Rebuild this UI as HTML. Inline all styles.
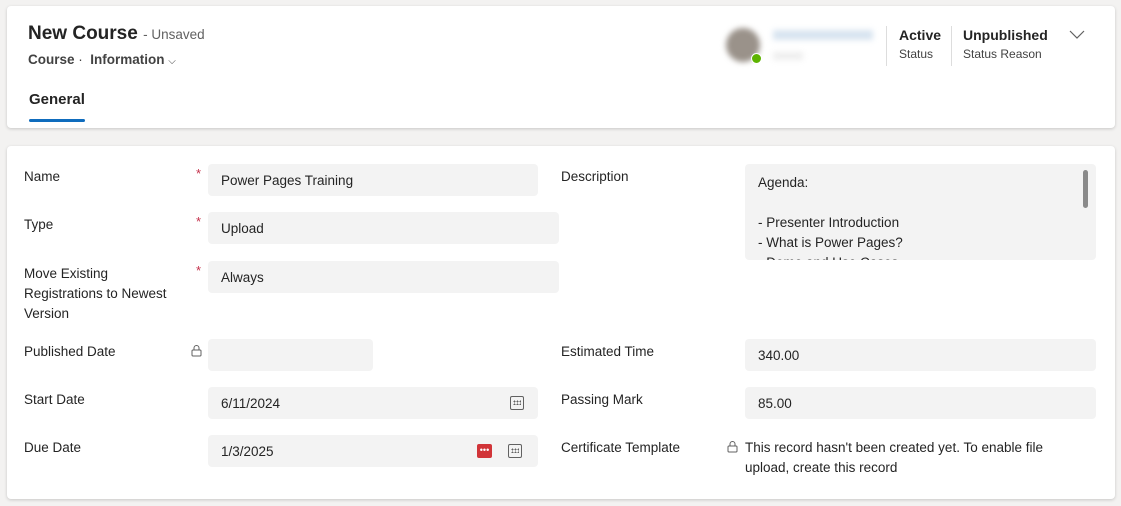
<!DOCTYPE html>
<html><head><style>
body{margin:0;width:1121px;height:506px;background:#f3f2f1;font-family:"Liberation Sans",sans-serif;color:#242424;position:relative;overflow:hidden}
.card{position:absolute;background:#fff;border-radius:4px;box-shadow:0 1px 3px rgba(0,0,0,.18)}
.a{position:absolute;white-space:nowrap}
.lbl{position:absolute;font-size:13.5px;color:#242424;line-height:20px}
.in{position:absolute;background:#f3f3f3;border-radius:4px;font-size:13.5px;line-height:34px;padding-left:13px;box-sizing:border-box;height:32px}
.req{position:absolute;color:#c4314b;font-size:13px}
.cal{position:absolute;width:12px;height:12px;border:1px solid #616161;border-radius:2px}
.cal:after{content:"";position:absolute;left:2px;top:3px;width:8px;height:5px;background:radial-gradient(circle,#616161 0.8px,transparent 1px) 0 0/3px 3px}
</style></head><body>
<div class="card" style="left:7px;top:6px;width:1108px;height:122px">
 <div class="a" style="left:21px;top:17px;font-size:19px;font-weight:bold">New Course <span style="font-size:13.5px;font-weight:normal;color:#616161">- Unsaved</span></div>
 <div class="a" style="left:21px;top:46px;font-size:13.5px;font-weight:bold;color:#424242">Course <span style="font-weight:normal">·</span>&nbsp; Information <span style="font-weight:normal;font-size:10px">&#x2335;</span></div>
 <div class="a" style="left:22px;top:85px;font-size:15px;font-weight:bold">General</div>
 <div class="a" style="left:22px;top:113px;width:56px;height:3px;background:#0f6cbd;border-radius:2px"></div>
 <div class="a" style="left:719px;top:22px;width:34px;height:34px;border-radius:50%;background:#9a928a;filter:blur(3px)"></div>
 <div class="a" style="left:744px;top:47px;width:9px;height:9px;border-radius:50%;background:#5db300;border:1.5px solid #fff"></div>
 <div class="a" style="left:766px;top:24px;width:100px;height:10px;background:#d8e4f0;filter:blur(3px)"></div>
 <div class="a" style="left:766px;top:46px;width:30px;height:8px;background:#eee;filter:blur(3px)"></div>
 <div class="a" style="left:879px;top:20px;width:1px;height:40px;background:#ddd"></div>
 <div class="a" style="left:892px;top:21px;font-size:14px;font-weight:bold">Active</div>
 <div class="a" style="left:892px;top:41px;font-size:12px;color:#424242">Status</div>
 <div class="a" style="left:944px;top:20px;width:1px;height:40px;background:#ddd"></div>
 <div class="a" style="left:956px;top:21px;font-size:14px;font-weight:bold">Unpublished</div>
 <div class="a" style="left:956px;top:41px;font-size:12px;color:#424242">Status Reason</div>
 <svg class="a" style="left:1062px;top:24px" width="16" height="10"><path d="M1 1l7 7 7-7" fill="none" stroke="#616161" stroke-width="1.2"/></svg>
</div>
<div class="card" style="left:7px;top:146px;width:1108px;height:353px"></div>
<div class="lbl" style="left:24px;top:167px">Name</div><div class="req" style="left:196px;top:166px">*</div>
<div class="in" style="left:208px;top:164px;width:330px">Power Pages Training</div>
<div class="lbl" style="left:24px;top:215px">Type</div><div class="req" style="left:196px;top:214px">*</div>
<div class="in" style="left:208px;top:212px;width:351px">Upload</div>
<div class="lbl" style="left:24px;top:264px">Move Existing<br>Registrations to Newest<br>Version</div><div class="req" style="left:196px;top:263px">*</div>
<div class="in" style="left:208px;top:261px;width:351px">Always</div>
<div class="lbl" style="left:24px;top:342px">Published Date</div>
<svg class="a" style="left:191px;top:345px" width="11" height="12"><rect x="1" y="5" width="9" height="6" rx="1" fill="none" stroke="#616161"/><path d="M3 5V3a2.5 2.5 0 015 0v2" fill="none" stroke="#616161"/></svg>
<div class="in" style="left:208px;top:339px;width:165px"></div>
<div class="lbl" style="left:24px;top:390px">Start Date</div>
<div class="in" style="left:208px;top:387px;width:330px">6/11/2024</div>
<div class="cal" style="left:510px;top:396px"></div>
<div class="lbl" style="left:24px;top:438px">Due Date</div>
<div class="in" style="left:208px;top:435px;width:330px">1/3/2025</div>
<div class="a" style="left:477px;top:444px;width:15px;height:14px;background:#d13438;border-radius:2px;color:#fff;font-size:9px;line-height:12px;text-align:center">•••</div>
<div class="cal" style="left:508px;top:444px"></div>
<div class="lbl" style="left:561px;top:167px">Description</div>
<div class="a" style="left:745px;top:164px;width:351px;height:96px;background:#f3f3f3;border-radius:4px;overflow:hidden;font-size:13.5px;line-height:20px;padding:9px 13px;box-sizing:border-box;white-space:normal">Agenda:<br><br>- Presenter Introduction<br>- What is Power Pages?<br>- Demo and Use Cases</div>
<div class="a" style="left:1083px;top:170px;width:5px;height:38px;background:#8a8a8a;border-radius:3px"></div>
<div class="lbl" style="left:561px;top:342px">Estimated Time</div>
<div class="in" style="left:745px;top:339px;width:351px">340.00</div>
<div class="lbl" style="left:561px;top:390px">Passing Mark</div>
<div class="in" style="left:745px;top:387px;width:351px">85.00</div>
<div class="lbl" style="left:561px;top:438px">Certificate Template</div>
<svg class="a" style="left:727px;top:441px" width="11" height="12"><rect x="1" y="5" width="9" height="6" rx="1" fill="none" stroke="#616161"/><path d="M3 5V3a2.5 2.5 0 015 0v2" fill="none" stroke="#616161"/></svg>
<div class="lbl" style="left:745px;top:438px">This record hasn't been created yet. To enable file<br>upload, create this record</div>
</body></html>
